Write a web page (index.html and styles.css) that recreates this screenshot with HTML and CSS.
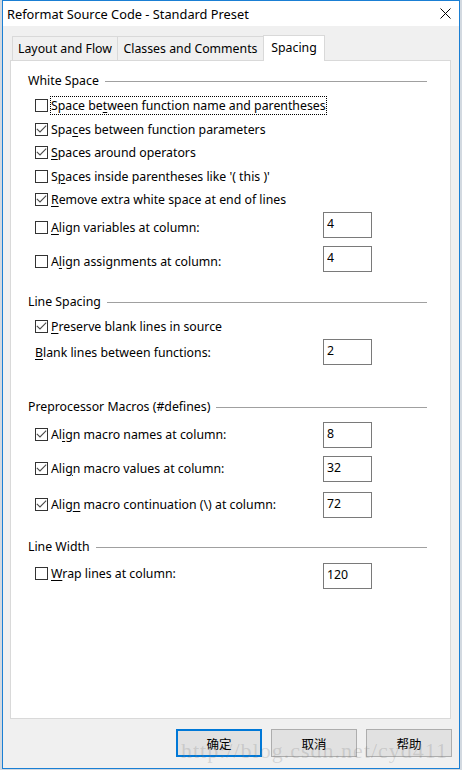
FILE: index.html
```html
<!DOCTYPE html>
<html>
<head>
<meta charset="utf-8">
<link rel="stylesheet" href="styles.css">
</head>
<body>
<div class="window">
  <div class="titlebar">
    <span class="title">Reformat Source Code - Standard Preset</span>
    <svg class="close" width="11" height="11" viewBox="0 0 11 11"><path d="M0.5 0.5 L10.5 10.5 M10.5 0.5 L0.5 10.5" stroke="#000" stroke-width="1" fill="none"/></svg>
  </div>
  <div class="client">
    <div class="tabs">
      <div class="tab tab-layout">Layout and Flow</div>
      <div class="tab tab-classes">Classes and Comments</div>
      <div class="tab tab-spacing active">Spacing</div>
    </div>
    <div class="panel">
      <div class="group-head"><span>White Space</span><span class="rule"></span></div>
      <div class="rows first">
        <div class="row"><span class="box"></span><span class="label focus">Space be<u>t</u>ween function name and parentheses</span></div>
        <div class="row"><span class="box checked"><svg width="11" height="11" viewBox="0 0 11 11"><path d="M0.8 4.8 L4 8 L10.2 1.6" stroke="#4a4a4a" stroke-width="1.1" fill="none"/></svg></span><span class="label">Spa<u>c</u>es between function parameters</span></div>
        <div class="row"><span class="box checked"><svg width="11" height="11" viewBox="0 0 11 11"><path d="M0.8 4.8 L4 8 L10.2 1.6" stroke="#4a4a4a" stroke-width="1.1" fill="none"/></svg></span><span class="label"><u>S</u>paces around operators</span></div>
        <div class="row"><span class="box"></span><span class="label">S<u>p</u>aces inside parentheses like '( this )'</span></div>
        <div class="row"><span class="box checked"><svg width="11" height="11" viewBox="0 0 11 11"><path d="M0.8 4.8 L4 8 L10.2 1.6" stroke="#4a4a4a" stroke-width="1.1" fill="none"/></svg></span><span class="label"><u>R</u>emove extra white space at end of lines</span></div>
      </div>
      <div class="field-row gap-half down"><div class="lead"><span class="box"></span><span class="label"><u>A</u>lign variables at column:</span></div><input class="num" type="text" value="4"></div>
      <div class="field-row gap-8 down"><div class="lead"><span class="box"></span><span class="label">A<u>l</u>ign assignments at column:</span></div><input class="num" type="text" value="4"></div>

      <div class="group-head head-line"><span>Line Spacing</span><span class="rule"></span></div>
      <div class="rows first">
        <div class="row"><span class="box checked"><svg width="11" height="11" viewBox="0 0 11 11"><path d="M0.8 4.8 L4 8 L10.2 1.6" stroke="#4a4a4a" stroke-width="1.1" fill="none"/></svg></span><span class="label"><u>P</u>reserve blank lines in source</span></div>
      </div>
      <div class="field-row gap-half"><div class="lead"><span class="label plain"><u>B</u>lank lines between functions:</span></div><input class="num" type="text" value="2"></div>

      <div class="group-head head-macro"><span>Preprocessor Macros (#defines)</span><span class="rule"></span></div>
      <div class="field-row gap-7 up"><div class="lead"><span class="box checked"><svg width="11" height="11" viewBox="0 0 11 11"><path d="M0.8 4.8 L4 8 L10.2 1.6" stroke="#4a4a4a" stroke-width="1.1" fill="none"/></svg></span><span class="label">Al<u>i</u>gn macro names at column:</span></div><input class="num" type="text" value="8"></div>
      <div class="field-row gap-8 up"><div class="lead"><span class="box checked"><svg width="11" height="11" viewBox="0 0 11 11"><path d="M0.8 4.8 L4 8 L10.2 1.6" stroke="#4a4a4a" stroke-width="1.1" fill="none"/></svg></span><span class="label">Ali<u>g</u>n macro values at column:</span></div><input class="num" type="text" value="32"></div>
      <div class="field-row gap-10 up"><div class="lead"><span class="box checked"><svg width="11" height="11" viewBox="0 0 11 11"><path d="M0.8 4.8 L4 8 L10.2 1.6" stroke="#4a4a4a" stroke-width="1.1" fill="none"/></svg></span><span class="label">Alig<u>n</u> macro continuation (\) at column:</span></div><input class="num" type="text" value="72"></div>

      <div class="group-head head-width"><span>Line Width</span><span class="rule"></span></div>
      <div class="field-row gap-8 up2"><div class="lead"><span class="box"></span><span class="label"><u>W</u>rap lines at column:</span></div><input class="num" type="text" value="120"></div>
    </div>
    <div class="buttons">
      <button class="btn default">确定</button>
      <button class="btn">取消</button>
      <button class="btn">帮助</button>
    </div>
  </div>
  <div class="watermark">http://blog.csdn.net/cyd411</div>
</div>
</body>
</html>
```
FILE: styles.css
```css
* { box-sizing: border-box; }

body {
  margin: 0;
  background: #d3d9e0;
  font-family: "Noto Sans", "Liberation Sans", sans-serif;
  font-size: 12.3px;
  color: #000;
}

.window {
  position: relative;
  margin-left: 2px;
  width: 458px;
  height: 769px;
  border: 1px solid #1a7fd4;
  background: #f0f0f0;
  display: flex;
  flex-direction: column;
}

.titlebar {
  height: 25px;
  background: #fff;
  display: flex;
  align-items: center;
  justify-content: space-between;
  padding: 0 8px 0 4px;
}

.title {
  font-size: 12.8px;
  line-height: 16px;
}

.client {
  flex: 1;
  display: flex;
  flex-direction: column;
  padding: 9px 8px 0 7px;
}

.tabs {
  display: flex;
  align-items: flex-end;
  height: 25px;
  margin-left: 2px;
}

.tab {
  height: 24px;
  border: 1px solid #d9d9d9;
  border-bottom: none;
  background: #f0f0f0;
  display: flex;
  align-items: center;
  justify-content: center;
  padding-bottom: 1px;
}

.tab + .tab { margin-left: -1px; }

.tab-layout { width: 106px; }
.tab-classes { width: 147px; }
.tab-spacing { width: 62px; }

.tab.active {
  height: 26px;
  margin-bottom: -1px;
  background: #fff;
  position: relative;
  z-index: 1;
  padding-bottom: 3px;
}

.panel {
  height: 659px;
  background: #fff;
  border: 1px solid #d9d9d9;
  padding-top: 12px;
  display: flex;
  flex-direction: column;
}

.group-head {
  height: 16px;
  display: flex;
  align-items: center;
  padding: 0 23px 0 17px;
  line-height: 16px;
}

.group-head .rule {
  flex: 1;
  height: 1px;
  background: #a0a0a0;
  margin-left: 6px;
}

.head-line { margin-top: 22px; }
.head-macro { margin-top: 34px; }
.head-width { margin-top: 21px; }

.rows.first { margin-top: 5px; }

.row {
  height: 23.5px;
  display: flex;
  align-items: center;
  padding-left: 24px;
}

.box {
  width: 13px;
  height: 13px;
  border: 1px solid #333;
  background: #fff;
  flex: none;
  display: flex;
}

.label {
  margin-left: 2px;
  border: 1px solid transparent;
  line-height: 17px;
  white-space: nowrap;
}

.label.plain { margin-left: -1px; }

.label.focus { border: 1px dotted #000; }

.label u { text-underline-offset: 2px; }

.field-row {
  height: 26px;
  display: flex;
  align-items: center;
  justify-content: space-between;
  padding: 0 78px 0 24px;
}

.field-row .lead {
  display: flex;
  align-items: center;
}

.field-row.down .lead { padding-top: 5px; }
.field-row.up .lead { padding-bottom: 2px; }
.field-row.up2 .lead { padding-bottom: 5px; }

.gap-half { margin-top: 0.5px; }
.gap-7 { margin-top: 7px; }
.gap-8 { margin-top: 8px; }
.gap-10 { margin-top: 10px; }

.num {
  width: 49px;
  height: 26px;
  border: 1px solid #7a7a7a;
  padding: 0 0 3px 3px;
  margin: 0;
  font: inherit;
  color: #000;
  background: #fff;
  outline: none;
}

.buttons {
  display: flex;
  justify-content: flex-end;
  gap: 9px;
  margin-top: 10px;
  margin-right: -1px;
}

.btn {
  width: 86px;
  height: 28px;
  margin: 0;
  padding: 0;
  background: #e1e1e1;
  border: 1px solid #adadad;
  font-family: "Noto Sans CJK SC", "Noto Sans", sans-serif;
  font-size: 12.5px;
  color: #000;
}

.btn.default { border: 2px solid #0078d7; }

.watermark {
  position: absolute;
  left: 178px;
  top: 739px;
  font-family: "Liberation Serif", serif;
  font-size: 22px;
  line-height: 22px;
  letter-spacing: 1px;
  color: rgba(120, 120, 120, 0.24);
  white-space: nowrap;
  pointer-events: none;
}
```
